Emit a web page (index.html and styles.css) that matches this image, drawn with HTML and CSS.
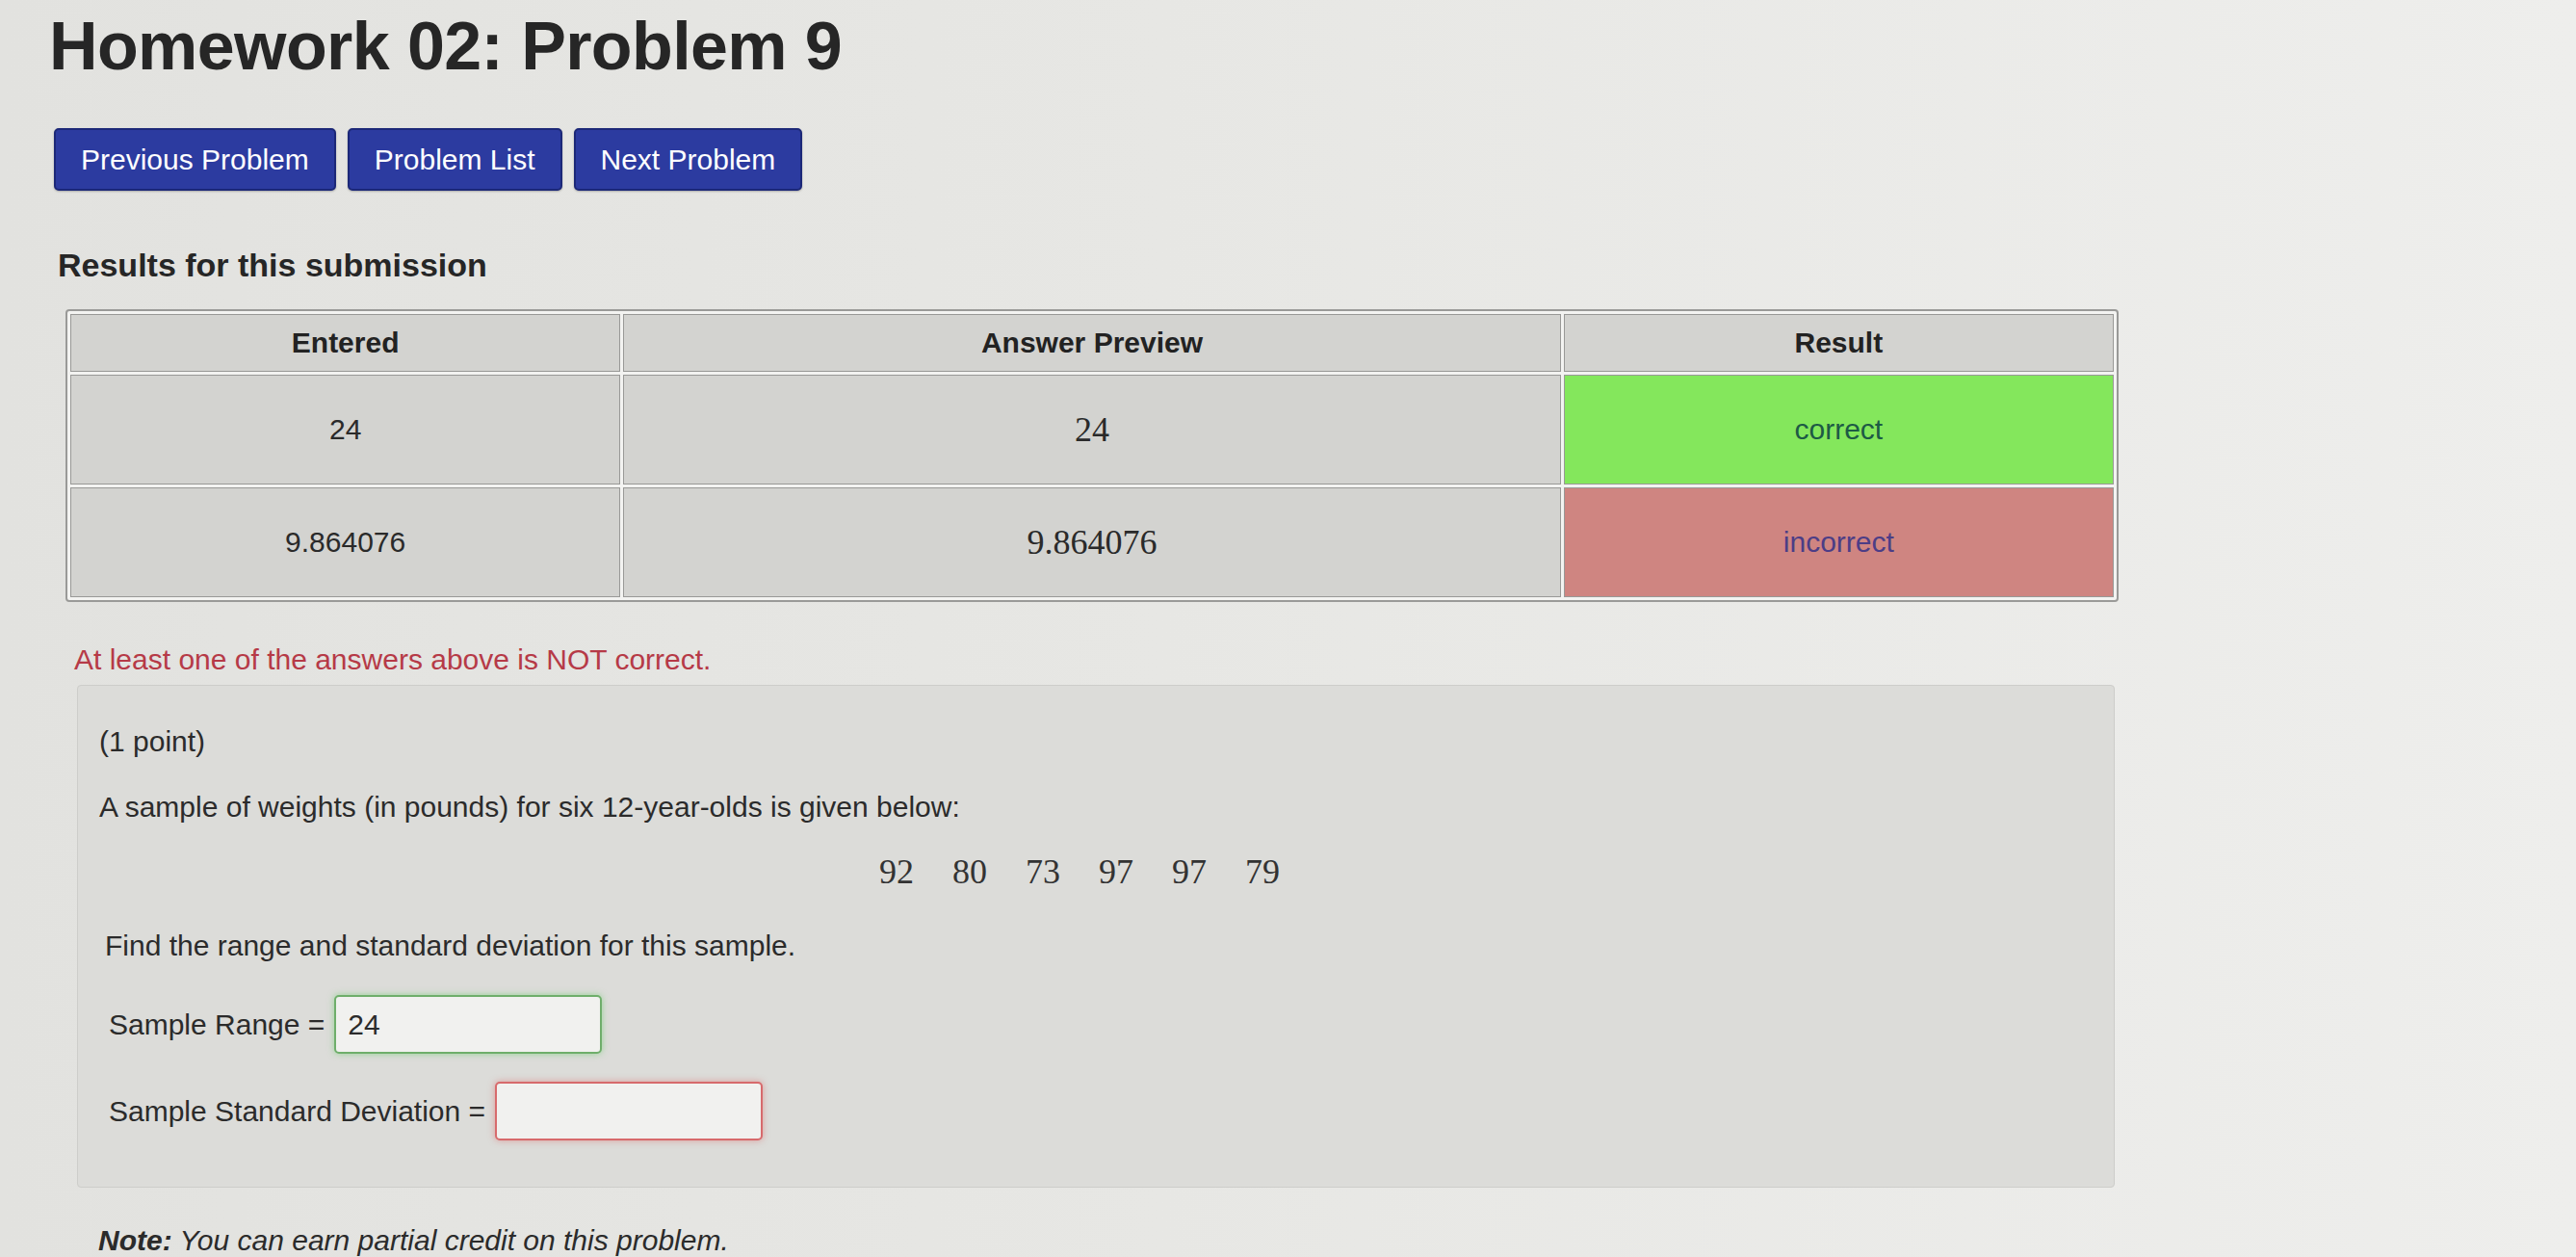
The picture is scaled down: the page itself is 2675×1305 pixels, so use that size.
FILE: index.html
```html
<!DOCTYPE html>
<html lang="en">
<head>
<meta charset="utf-8">
<title>Homework 02: Problem 9</title>
<link rel="stylesheet" href="styles.css">
</head>
<body>
<div class="page">
  <h1 class="title">Homework 02: Problem 9</h1>
  <nav class="nav-buttons">
    <a class="btn" href="#">Previous Problem</a>
    <a class="btn" href="#">Problem List</a>
    <a class="btn" href="#">Next Problem</a>
  </nav>
  <h2 class="results-heading">Results for this submission</h2>
  <table class="results">
    <thead>
      <tr>
        <th class="col-entered">Entered</th>
        <th class="col-preview">Answer Preview</th>
        <th class="col-result">Result</th>
      </tr>
    </thead>
    <tbody>
      <tr>
        <td>24</td>
        <td class="math">24</td>
        <td class="ok">correct</td>
      </tr>
      <tr>
        <td>9.864076</td>
        <td class="math">9.864076</td>
        <td class="bad">incorrect</td>
      </tr>
    </tbody>
  </table>
  <p class="warning">At least one of the answers above is NOT correct.</p>
  <div class="problem">
    <p class="points">(1 point)</p>
    <p class="text">A sample of weights (in pounds) for six 12-year-olds is given below:</p>
    <div class="data">
      <span>92</span><span>80</span><span>73</span><span>97</span><span>97</span><span>79</span>
    </div>
    <p class="find">Find the range and standard deviation for this sample.</p>
    <div class="answer-row range-row">
      <label class="answer-label">Sample Range =</label>
      <input class="answer correct-input" type="text" value="24">
    </div>
    <div class="answer-row sd-row">
      <label class="answer-label">Sample Standard Deviation =</label>
      <input class="answer incorrect-input" type="text" value="">
    </div>
  </div>
  <p class="note"><b>Note:</b> You can earn partial credit on this problem.</p>
</div>
</body>
</html>
```
FILE: styles.css
```css
html, body {
  margin: 0;
  padding: 0;
}
body {
  background: linear-gradient(to right, #e2e2df 0%, #e7e7e4 45%, #eeeeec 100%);
  font-family: "Liberation Sans", Arial, sans-serif;
  color: #2b2b2b;
  height: 1305px;
  overflow: hidden;
}
.page {
  padding-left: 56px;
}
.title {
  margin: 8px 0 0 -5px;
  font-size: 70px;
  line-height: 80px;
  font-weight: bold;
  color: #262626;
  letter-spacing: -0.6px;
}
.nav-buttons {
  display: flex;
  gap: 12px;
  margin-top: 45px;
}
.btn {
  display: flex;
  align-items: center;
  height: 65px;
  box-sizing: border-box;
  padding: 0 26px;
  background: #2c3ba0;
  border: 2px solid #1c2878;
  border-radius: 5px;
  color: #ffffff;
  font-size: 30px;
  text-decoration: none;
  box-shadow: 0 1px 2px rgba(0,0,0,0.25);
}
.results-heading {
  margin: 57px 0 0 4px;
  font-size: 34px;
  line-height: 40px;
  font-weight: bold;
  color: #262626;
}
.results {
  margin: 26px 0 0 12px;
  width: 2132px;
  border-collapse: separate;
  border-spacing: 3px;
  background: #f3f3f1;
  border: 2px solid #9a9a98;
  border-radius: 4px;
  font-size: 30px;
}
.results th,
.results td {
  background: #d3d3d0;
  border: 1px solid #999997;
  text-align: center;
  vertical-align: middle;
  padding: 0;
}
.results th {
  height: 58px;
  font-weight: bold;
  color: #222;
}
.results td {
  height: 112px;
  color: #2a2a2a;
}
.col-entered { width: 27%; }
.col-preview { width: 46%; }
.col-result { width: 27%; }
.results td.math {
  font-family: "Liberation Serif", "Times New Roman", serif;
  font-size: 36px;
}
.results td.ok {
  background: #84e75c;
  color: #1d5a45;
}
.results td.bad {
  background: #cf8581;
  color: #4c3d86;
}
.warning {
  margin: 42px 0 0 21px;
  font-size: 30px;
  line-height: 36px;
  color: #b63a47;
}
.problem {
  margin: 8px 0 0 24px;
  width: 2116px;
  box-sizing: border-box;
  padding: 40px 22px 48px 22px;
  background: #dcdcd9;
  border: 1px solid #cdcdca;
  border-radius: 4px;
  font-size: 30px;
  color: #2b2b2b;
}
.problem p {
  margin: 0;
  line-height: 36px;
}
.problem .text {
  margin-top: 32px;
}
.data {
  display: flex;
  justify-content: center;
  gap: 40px;
  margin-top: 27px;
  padding-right: 34px;
  font-family: "Liberation Serif", "Times New Roman", serif;
  font-size: 36px;
  line-height: 44px;
  color: #333;
}
.problem .find {
  margin-top: 37px;
  padding-left: 6px;
}
.answer-row {
  display: flex;
  align-items: center;
  gap: 10px;
  padding-left: 10px;
}
.range-row {
  margin-top: 33px;
}
.sd-row {
  margin-top: 29px;
}
.answer-label {
  font-size: 30px;
}
.answer {
  width: 278px;
  height: 61px;
  box-sizing: border-box;
  padding: 0 12px;
  font-family: "Liberation Sans", Arial, sans-serif;
  font-size: 30px;
  color: #2b2b2b;
  background: #f1f1ef;
  border-radius: 5px;
  outline: none;
}
.correct-input {
  border: 2px solid #6fae6b;
  box-shadow: 0 0 7px rgba(90, 200, 90, 0.55);
}
.incorrect-input {
  border: 2px solid #d76a6c;
  box-shadow: 0 0 7px rgba(220, 90, 90, 0.5);
}
.note {
  margin: 40px 0 0 46px;
  font-size: 30px;
  line-height: 30px;
  font-style: italic;
  color: #2b2b2b;
}
```
